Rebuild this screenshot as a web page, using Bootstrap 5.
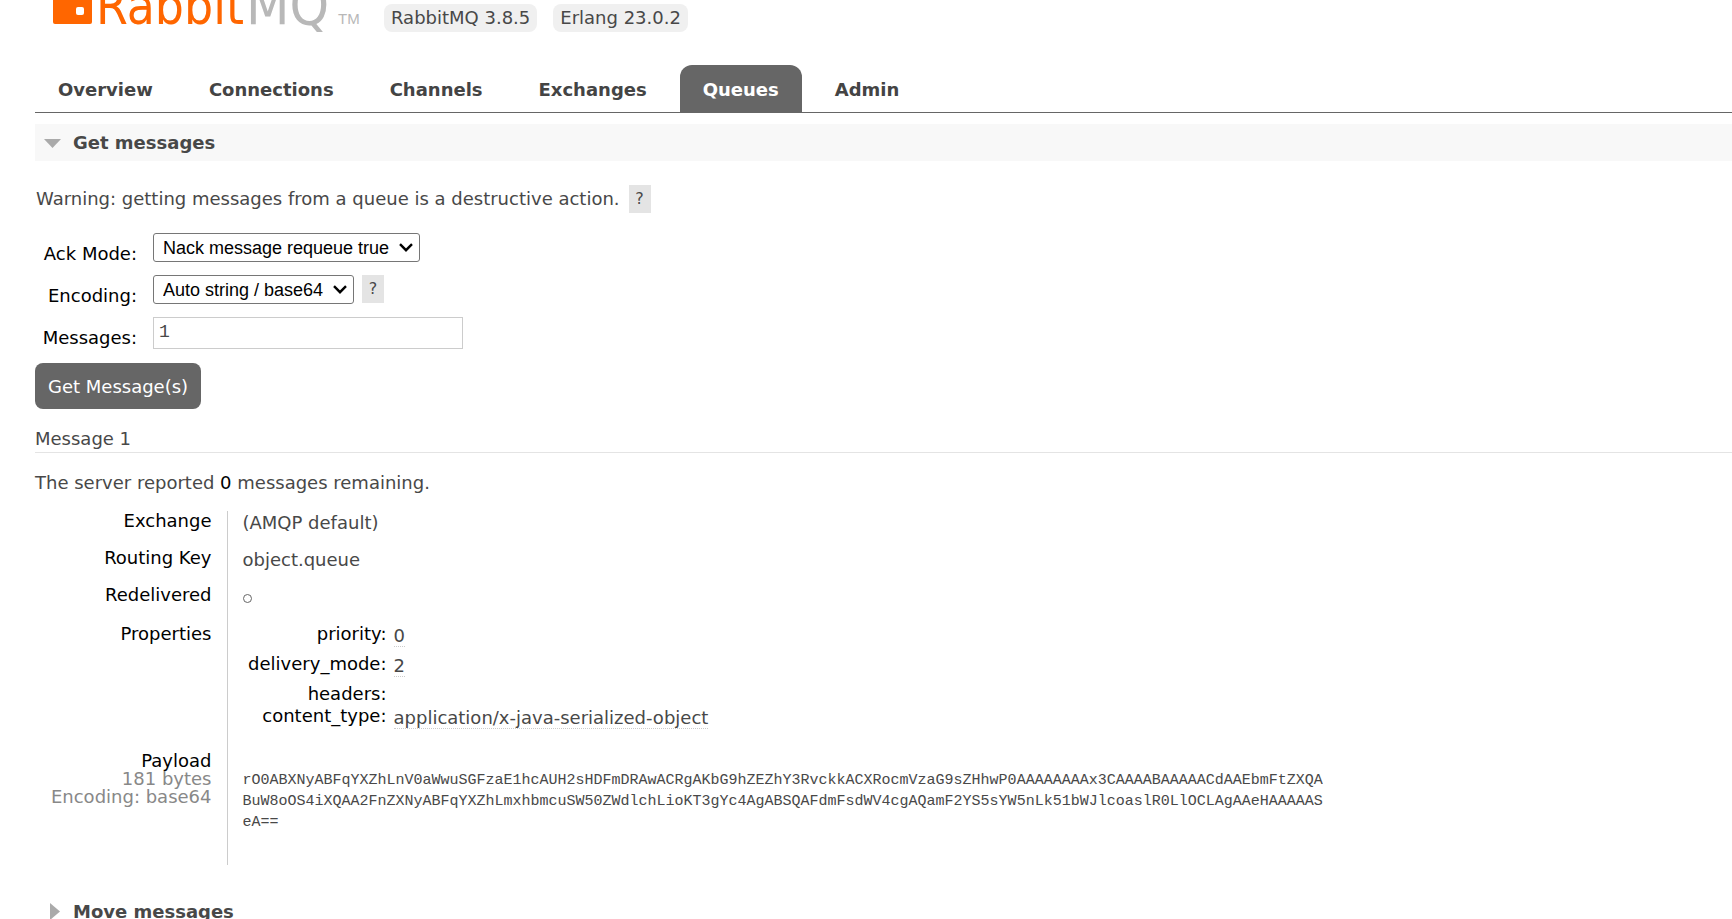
<!DOCTYPE html>
<html lang="en">
<head>
<meta charset="utf-8">
<meta name="viewport" content="width=device-width, initial-scale=1">
<title>RabbitMQ Management</title>
<link rel="stylesheet" href="https://cdn.jsdelivr.net/npm/bootstrap@5.3.0/dist/css/bootstrap.min.css">
<style>
  body { font-family: "DejaVu Sans", sans-serif; font-size: 18px; line-height: 24px; color: #484848; background: #fff; }
  .page { padding-left: 35px; }
  .masthead { height: 65px; }
  .logo { width: 331px; height: 32px; margin-left: 18px; }
  .version { background: #f0f0f0; border-radius: 8px; padding: 2px 7px; margin-top: 4px; }
  .tabs { border-bottom: 1px solid #666; gap: 10px; }
  .tabs .nav-link { color: #444; font-weight: bold; padding: 13px 23px 10px; border-radius: 12px 12px 0 0; }
  .tabs .nav-link.active { background: #666; color: #fff; }
  .section-head { height: 37px; border: 0; background: #f8f8f8; color: #484848; font-weight: bold; padding: 0 0 0 9px; margin-top: 11px; }
  .section-head.closed { background: none; margin-top: 28px; }
  .section-head svg { width: 17px; height: 17px; margin-right: 12px; fill: #aaa; }
  .help { background: #e4e4e4; color: #484848; width: 22px; height: 28px; line-height: 28px; font-size: 16px; }
  .warning { gap: 9px; margin: 24px 0 0 1px; line-height: 26px; }
  .fields { display: grid; grid-template-columns: 102px 310px; column-gap: 16px; grid-auto-rows: 42px; }
  .fields label { color: #000; text-align: right; padding-top: 9px; }
  .fields .form-select { width: auto; height: 29px; padding: 0 29px 0 9px; border: 1px solid #767676; border-radius: 3px; color: #000; font: 18px "Liberation Sans", sans-serif;
    background: #fff url("data:image/svg+xml,%3Csvg xmlns='http://www.w3.org/2000/svg' viewBox='0 0 14 9'%3E%3Cpath d='M1 1.2 7 7.2 13 1.2' fill='none' stroke='%23000' stroke-width='2.4'/%3E%3C/svg%3E") no-repeat right 6px center / 14px 9px; }
  .fields .form-control { height: 32px; border: 1px solid #ccc; border-radius: 0; padding: 0 5px 3px; color: #484848; font: 18px "Liberation Mono", monospace; }
  .btn-get { background: #666; color: #fff; border: 0; border-radius: 8px; font-size: 18px; line-height: 24px; padding: 12px 13px 10px; margin-top: 4px; }
  .btn-get:hover { background: #f60; color: #fff; }
  .message-title { font-size: 18px; line-height: 24px; font-weight: normal; border-bottom: 1px solid #e4e4e4; margin: 18px 0; padding-bottom: 1px; }
  .facts th { font-weight: normal; color: #000; text-align: right; vertical-align: top; line-height: 18px; padding: 1px 0 0; }
  .facts td { vertical-align: top; padding: 0; }
  .facts > tbody > tr { height: 37px; }
  .facts > tbody > tr > th { width: 192px; padding-right: 15px; }
  .facts > tbody > tr > td { border-left: 1px solid #ccc; padding-left: 15px; }
  .facts > tbody > tr.row-flag { height: 39px; }
  .facts > tbody > tr.row-props { height: 127px; }
  .facts > tbody > tr.row-payload { height: 114px; }
  .facts .props th { width: 151px; padding-right: 7px; }
  .props tr { height: 30px; }
  .props tr.empty { height: 22px; }
  .props abbr { text-decoration: none; border-bottom: 1px dotted #ccc; cursor: help; }
  .flag { display: block; width: 9px; height: 9px; margin-top: 9px; border: 1px solid #666; border-radius: 50%; }
  .muted { color: #888; }
  .payload { font: 15px/21px "Liberation Mono", monospace; color: #484848; margin: 19px 0 0; }
</style>
<script src="https://cdn.jsdelivr.net/npm/bootstrap@5.3.0/dist/js/bootstrap.bundle.min.js"></script>
</head>
<body>
<div class="page">
  <header class="masthead d-flex align-items-start">
    <a href="#" aria-label="RabbitMQ home">
      <svg class="logo d-block" viewBox="53 0 331 32">
        <path fill="#f60" d="M53 0H92V22Q92 24 90 24H55Q53 24 53 22Z"/>
        <rect x="76" y="7" width="8" height="8" rx="2" fill="#fff"/>
        <text x="96" y="24" font-family="DejaVu Sans Condensed, Liberation Sans, sans-serif" font-size="51" fill="#f60">Rabbit</text>
        <text x="246" y="24" font-family="DejaVu Sans Condensed, Liberation Sans, sans-serif" font-size="56" fill="#b8b8b8">MQ</text>
        <text x="338" y="24" font-family="Liberation Sans, sans-serif" font-size="15" fill="#b8b8b8">TM</text>
      </svg>
    </a>
    <span class="version">RabbitMQ 3.8.5</span>
    <span class="version ms-3">Erlang 23.0.2</span>
  </header>

  <nav class="nav tabs">
    <a class="nav-link" href="#">Overview</a>
    <a class="nav-link" href="#">Connections</a>
    <a class="nav-link" href="#">Channels</a>
    <a class="nav-link" href="#">Exchanges</a>
    <a class="nav-link active" href="#" aria-current="page">Queues</a>
    <a class="nav-link" href="#">Admin</a>
  </nav>

  <main>
    <button type="button" class="section-head d-flex align-items-center w-100">
      <svg viewBox="0 0 17 17"><path d="M0 5H17L8.500 14Z"/></svg>Get messages
    </button>

    <p class="warning d-flex align-items-center">Warning: getting messages from a queue is a destructive action. <a class="help text-center text-decoration-none" href="#">?</a></p>

    <form>
      <div class="fields pt-1 mt-3">
        <label for="ack">Ack Mode:</label>
        <div><select id="ack" class="form-select"><option>Nack message requeue true</option></select></div>
        <label for="enc">Encoding:</label>
        <div class="d-flex align-items-start gap-2"><select id="enc" class="form-select"><option>Auto string / base64</option></select><a class="help text-center text-decoration-none" href="#">?</a></div>
        <label for="count">Messages:</label>
        <div><input id="count" type="text" class="form-control" value="1"></div>
      </div>
      <button type="button" class="btn btn-get">Get Message(s)</button>
    </form>

    <h3 class="message-title">Message 1</h3>
    <p class="mb-3">The server reported <span class="text-black">0</span> messages remaining.</p>

    <table class="facts">
      <tbody>
        <tr><th scope="row">Exchange</th><td>(AMQP default)</td></tr>
        <tr><th scope="row">Routing Key</th><td>object.queue</td></tr>
        <tr class="row-flag"><th scope="row">Redelivered</th><td><span class="flag" role="img" aria-label="no"></span></td></tr>
        <tr class="row-props"><th scope="row">Properties</th><td>
          <table class="props">
            <tr><th scope="row">priority:</th><td><abbr>0</abbr></td></tr>
            <tr><th scope="row">delivery_mode:</th><td><abbr>2</abbr></td></tr>
            <tr class="empty"><th scope="row">headers:</th><td></td></tr>
            <tr><th scope="row">content_type:</th><td><abbr>application/x-java-serialized-object</abbr></td></tr>
          </table>
        </td></tr>
        <tr class="row-payload"><th scope="row">Payload<div class="muted">181 bytes</div><div class="muted">Encoding: base64</div></th><td>
<pre class="payload">rO0ABXNyABFqYXZhLnV0aWwuSGFzaE1hcAUH2sHDFmDRAwACRgAKbG9hZEZhY3RvckkACXRocmVzaG9sZHhwP0AAAAAAAAx3CAAAABAAAAACdAAEbmFtZXQA
BuW8oOS4iXQAA2FnZXNyABFqYXZhLmxhbmcuSW50ZWdlchLioKT3gYc4AgABSQAFdmFsdWV4cgAQamF2YS5sYW5nLk51bWJlcoaslR0LlOCLAgAAeHAAAAAS
eA==</pre>
        </td></tr>
      </tbody>
    </table>

    <button type="button" class="section-head closed d-flex align-items-center w-100">
      <svg viewBox="0 0 17 17"><path d="M6 0V17L16 8.500Z"/></svg>Move messages
    </button>
  </main>
</div>
</body>
</html>
